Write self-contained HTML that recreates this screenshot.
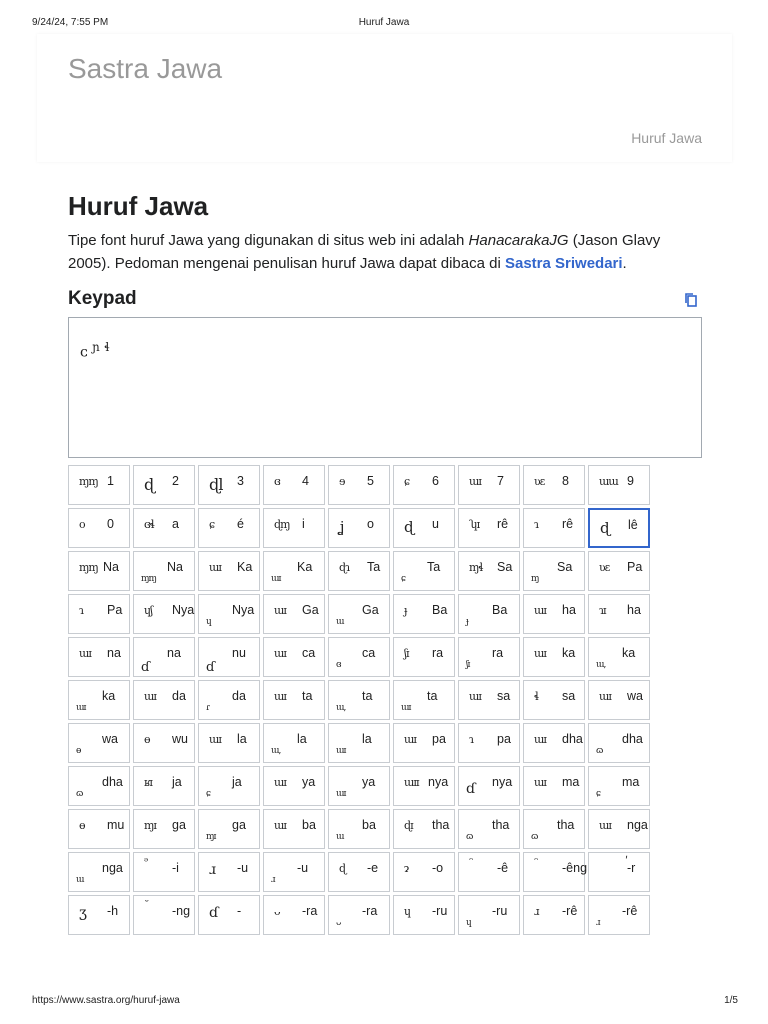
<!DOCTYPE html>
<html><head><meta charset="utf-8"><style>
*{margin:0;padding:0;box-sizing:border-box}
body{width:768px;height:1024px;background:#fff;font-family:"Liberation Sans",sans-serif;color:#222;position:relative;overflow:hidden}
.abs{position:absolute}
.pt{font-size:10px;color:#222}
.card{left:37px;top:34px;width:695px;height:128px;box-shadow:0 0 3px rgba(0,0,0,.06);background:#fff}
.grid{position:absolute;left:68px;top:465px;display:grid;grid-template-columns:repeat(9,62px);grid-auto-rows:40px;gap:3px}
.c{position:relative;border:1px solid #c8ccd1;background:#fff;font-size:12px}
.c .g{position:absolute;font-family:"DejaVu Serif",serif;color:#222;font-size:11px;letter-spacing:-1px}
.c .l{position:absolute;font-size:12.5px;color:#222}
.a .g{left:10px;top:9px}
.a .l{left:38px;top:8px}
.b .g{left:7px;top:22px;font-size:9px}
.b .l{left:33px;top:8px}
.sel{border:2px solid #36c}
</style></head><body>
<div class="abs pt" style="left:32px;top:17px">9/24/24, 7:55 PM</div>
<div class="abs pt" style="left:0;width:768px;text-align:center;top:17px">Huruf Jawa</div>
<div class="abs card"></div>
<div class="abs" style="left:68px;top:53px;font-size:28px;color:#999">Sastra Jawa</div>
<div class="abs" style="right:66px;top:130px;font-size:14px;color:#999">Huruf Jawa</div>
<div class="abs" style="left:68px;top:191px;font-size:26px;font-weight:bold;color:#202122">Huruf Jawa</div>
<div class="abs" style="left:68px;top:229px;width:602px;font-size:15px;line-height:23px;color:#202122">Tipe font huruf Jawa yang digunakan di situs web ini adalah <i>HanacarakaJG</i> (Jason Glavy 2005). Pedoman mengenai penulisan huruf Jawa dapat dibaca di <span style="color:#36c;font-weight:bold">Sastra Sriwedari</span>.</div>
<div class="abs" style="left:68px;top:288px;font-size:19px;font-weight:bold;color:#202122">Keypad</div>
<svg class="abs" style="left:684px;top:292px" width="14" height="16" viewBox="0 0 14 16"><rect x="4" y="4" width="8" height="10" fill="none" stroke="#36c" stroke-width="1.6"/><path d="M2 11V2h7" fill="none" stroke="#36c" stroke-width="1.6"/></svg>
<div class="abs" style="left:68px;top:317px;width:634px;height:141px;border:1px solid #a2a9b1"></div>
<div class="abs" style="left:80px;top:340px;font-family:'DejaVu Serif',serif;font-size:14px">ᴄ <sup>ɲ</sup> <sup>ɬ</sup></div>
<div class="grid">
<div class="c a"><span class="g">ɱɱ</span><span class="l">1</span></div>
<div class="c a"><span class="g" style="font-size:16px">ɖ</span><span class="l">2</span></div>
<div class="c a"><span class="g" style="font-size:16px">ɖl</span><span class="l">3</span></div>
<div class="c a"><span class="g">ɞ</span><span class="l">4</span></div>
<div class="c a"><span class="g">ɘ</span><span class="l">5</span></div>
<div class="c a"><span class="g">ɕ</span><span class="l">6</span></div>
<div class="c a"><span class="g">ɯɪ</span><span class="l">7</span></div>
<div class="c a"><span class="g">ʋɛ</span><span class="l">8</span></div>
<div class="c a"><span class="g">ɯɯ</span><span class="l">9</span></div>
<div class="c a"><span class="g">o</span><span class="l">0</span></div>
<div class="c a"><span class="g">ɞɬ</span><span class="l">a</span></div>
<div class="c a"><span class="g">ɕ</span><span class="l">é</span></div>
<div class="c a"><span class="g">ɖɱ</span><span class="l">i</span></div>
<div class="c a"><span class="g" style="font-size:15px">ʝ</span><span class="l">o</span></div>
<div class="c a"><span class="g" style="font-size:15px">ɖ</span><span class="l">u</span></div>
<div class="c a"><span class="g">ʮɪ</span><span class="l">rê</span></div>
<div class="c a"><span class="g">ɿ</span><span class="l">rê</span></div>
<div class="c a sel"><span class="g" style="font-size:15px">ɖ</span><span class="l">lê</span></div>
<div class="c a"><span class="g">ɱɱ</span><span class="l" style="left:34px">Na</span></div>
<div class="c b"><span class="g">ɱɱ</span><span class="l">Na</span></div>
<div class="c a"><span class="g">ɯɪ</span><span class="l">Ka</span></div>
<div class="c b"><span class="g">ɯɪ</span><span class="l">Ka</span></div>
<div class="c a"><span class="g">ɖɿ</span><span class="l">Ta</span></div>
<div class="c b"><span class="g">ɕ</span><span class="l">Ta</span></div>
<div class="c a"><span class="g">ɱɬ</span><span class="l">Sa</span></div>
<div class="c b"><span class="g">ɱ</span><span class="l">Sa</span></div>
<div class="c a"><span class="g">ʋɛ</span><span class="l">Pa</span></div>
<div class="c a"><span class="g">ɿ</span><span class="l">Pa</span></div>
<div class="c a"><span class="g">ɥʃ</span><span class="l">Nya</span></div>
<div class="c b"><span class="g">ɥ</span><span class="l">Nya</span></div>
<div class="c a"><span class="g">ɯɪ</span><span class="l">Ga</span></div>
<div class="c b"><span class="g">ɯ</span><span class="l">Ga</span></div>
<div class="c a"><span class="g">ɟ</span><span class="l">Ba</span></div>
<div class="c b"><span class="g">ɟ</span><span class="l">Ba</span></div>
<div class="c a"><span class="g">ɯɪ</span><span class="l">ha</span></div>
<div class="c a"><span class="g">ɿɪ</span><span class="l">ha</span></div>
<div class="c a"><span class="g">ɯɪ</span><span class="l">na</span></div>
<div class="c b"><span class="g" style="font-size:13px">ɗ</span><span class="l">na</span></div>
<div class="c b"><span class="g" style="font-size:13px">ɗ</span><span class="l">nu</span></div>
<div class="c a"><span class="g">ɯɪ</span><span class="l">ca</span></div>
<div class="c b"><span class="g">ɞ</span><span class="l">ca</span></div>
<div class="c a"><span class="g">ʃɪ</span><span class="l">ra</span></div>
<div class="c b"><span class="g">ʃɪ</span><span class="l">ra</span></div>
<div class="c a"><span class="g">ɯɪ</span><span class="l">ka</span></div>
<div class="c b"><span class="g">ɯ,</span><span class="l">ka</span></div>
<div class="c b"><span class="g">ɯɪ</span><span class="l">ka</span></div>
<div class="c a"><span class="g">ɯɪ</span><span class="l">da</span></div>
<div class="c b"><span class="g">ɾ</span><span class="l">da</span></div>
<div class="c a"><span class="g">ɯɪ</span><span class="l">ta</span></div>
<div class="c b"><span class="g">ɯ,</span><span class="l">ta</span></div>
<div class="c b"><span class="g">ɯɪ</span><span class="l">ta</span></div>
<div class="c a"><span class="g">ɯɪ</span><span class="l">sa</span></div>
<div class="c a"><span class="g">ɬ</span><span class="l">sa</span></div>
<div class="c a"><span class="g">ɯɪ</span><span class="l">wa</span></div>
<div class="c b"><span class="g">ɵ</span><span class="l">wa</span></div>
<div class="c a"><span class="g">ɵ</span><span class="l">wu</span></div>
<div class="c a"><span class="g">ɯɪ</span><span class="l">la</span></div>
<div class="c b"><span class="g">ɯ,</span><span class="l">la</span></div>
<div class="c b"><span class="g">ɯɪ</span><span class="l">la</span></div>
<div class="c a"><span class="g">ɯɪ</span><span class="l">pa</span></div>
<div class="c a"><span class="g">ɿ</span><span class="l">pa</span></div>
<div class="c a"><span class="g">ɯɪ</span><span class="l">dha</span></div>
<div class="c b"><span class="g">ɷ</span><span class="l">dha</span></div>
<div class="c b"><span class="g">ɷ</span><span class="l">dha</span></div>
<div class="c a"><span class="g">ʁɪ</span><span class="l">ja</span></div>
<div class="c b"><span class="g">ɕ</span><span class="l">ja</span></div>
<div class="c a"><span class="g">ɯɪ</span><span class="l">ya</span></div>
<div class="c b"><span class="g">ɯɪ</span><span class="l">ya</span></div>
<div class="c a"><span class="g">ɯɪɪ</span><span class="l" style="left:34px">nya</span></div>
<div class="c b"><span class="g" style="font-size:14px;top:14px">ɗ</span><span class="l">nya</span></div>
<div class="c a"><span class="g">ɯɪ</span><span class="l">ma</span></div>
<div class="c b"><span class="g">ɕ</span><span class="l">ma</span></div>
<div class="c a"><span class="g">ɵ</span><span class="l">mu</span></div>
<div class="c a"><span class="g">ɱɪ</span><span class="l">ga</span></div>
<div class="c b"><span class="g">ɱɪ</span><span class="l">ga</span></div>
<div class="c a"><span class="g">ɯɪ</span><span class="l">ba</span></div>
<div class="c b"><span class="g">ɯ</span><span class="l">ba</span></div>
<div class="c a"><span class="g">ɖɪ</span><span class="l">tha</span></div>
<div class="c b"><span class="g">ɷ</span><span class="l">tha</span></div>
<div class="c b"><span class="g">ɷ</span><span class="l">tha</span></div>
<div class="c a"><span class="g">ɯɪ</span><span class="l">nga</span></div>
<div class="c b"><span class="g">ɯ</span><span class="l">nga</span></div>
<div class="c a"><span class="g" style="top:2px">ᵊ</span><span class="l">-i</span></div>
<div class="c a"><span class="g" style="font-size:14px">ɹ</span><span class="l">-u</span></div>
<div class="c b"><span class="g">ɹ</span><span class="l">-u</span></div>
<div class="c a"><span class="g">ɖ</span><span class="l">-e</span></div>
<div class="c a"><span class="g">ɂ</span><span class="l">-o</span></div>
<div class="c a"><span class="g" style="top:2px">ᵔ</span><span class="l">-ê</span></div>
<div class="c a"><span class="g" style="top:2px">ᵔ</span><span class="l">-êng</span></div>
<div class="c a"><span class="g" style="top:2px;left:36px">ʹ</span><span class="l">-r</span></div>
<div class="c a"><span class="g" style="font-size:14px">ʒ</span><span class="l">-h</span></div>
<div class="c a"><span class="g" style="top:3px">˘</span><span class="l">-ng</span></div>
<div class="c a"><span class="g" style="font-size:14px">ɗ</span><span class="l">-</span></div>
<div class="c a"><span class="g">ᴗ</span><span class="l">-ra</span></div>
<div class="c b"><span class="g">ᴗ</span><span class="l">-ra</span></div>
<div class="c a"><span class="g">ɥ</span><span class="l">-ru</span></div>
<div class="c b"><span class="g">ɥ</span><span class="l">-ru</span></div>
<div class="c a"><span class="g">ɹ</span><span class="l">-rê</span></div>
<div class="c b"><span class="g">ɹ</span><span class="l">-rê</span></div>
</div>
<div class="abs pt" style="left:32px;top:995px">https://www.sastra.org/huruf-jawa</div>
<div class="abs pt" style="right:30px;top:995px">1/5</div>
</body></html>
